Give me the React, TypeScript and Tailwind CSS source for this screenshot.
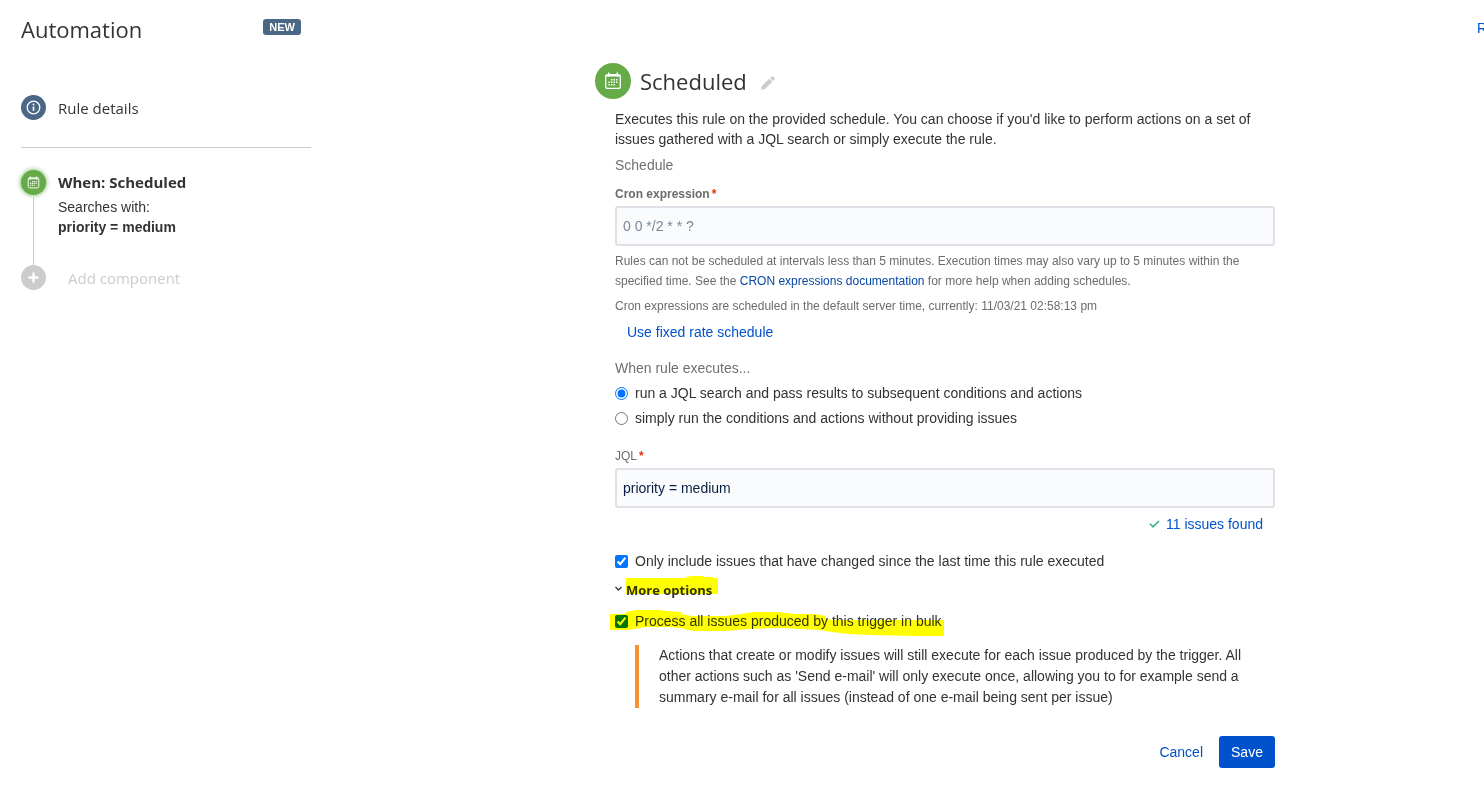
import type { ReactNode } from "react";

function CalendarIcon({ className }: { className?: string }) {
  return (
    <svg className={className} viewBox="0 0 18 18" fill="none" stroke="currentColor" aria-hidden="true">
      <rect x="1.7" y="2.6" width="14.6" height="13.8" rx="2" strokeWidth="1.3" />
      <path d="M2 3h14v1.5H2z" fill="currentColor" stroke="none" />
      <path d="M4.7 1v3M13.3 1v3" strokeWidth="1.4" strokeLinecap="round" />
      <path d="M7 7.7h7M4.4 10.2h9.6M4.4 12.7h7" strokeWidth="1.5" strokeDasharray="1.5 1" />
    </svg>
  );
}

function InfoIcon() {
  return (
    <svg className="size-[15px]" viewBox="0 0 15 15" fill="none" stroke="currentColor" aria-hidden="true">
      <circle cx="7.5" cy="7.5" r="6.3" strokeWidth="1.3" />
      <path d="M7.5 6.6v4.2" strokeWidth="1.7" />
      <circle cx="7.5" cy="4.6" r="1" fill="currentColor" stroke="none" />
    </svg>
  );
}

function Help({ children }: { children: ReactNode }) {
  return <p className="text-xs leading-5 text-[#6c6c6c]">{children}</p>;
}

function Sidebar() {
  return (
    <aside className="w-[406px] shrink-0 pl-[21px] pr-[95px]">
      <header className="flex h-[58px] items-center justify-between pr-[10px]">
        <h1 className="font-[Segoe_UI,Open_Sans,sans-serif] text-[22px] leading-8">Automation</h1>
        <span className="mb-1 rounded-[3px] bg-[#4a6785] px-1.5 text-[11px] font-bold leading-4 text-white">NEW</span>
      </header>

      <a href="#details" className="mt-[37px] flex items-center gap-3 border-b border-[#ccc] pb-[27px]">
        <span className="grid size-[25px] place-items-center rounded-full bg-[#4a6785] text-white">
          <InfoIcon />
        </span>
        <span className="font-[Segoe_UI,Open_Sans,sans-serif] text-[15px] leading-5">Rule details</span>
      </a>

      <div className="mt-[22px] flex gap-3">
        <div className="flex flex-col items-center">
          <span className="grid size-[25px] place-items-center rounded-full bg-[#67ab49] text-white shadow-[0_0_5px_#67ab49]">
            <CalendarIcon className="size-[13px]" />
          </span>
          <span className="mt-0.5 w-px flex-1 bg-[#ccc]" />
        </div>
        <a href="#trigger" className="block pb-7">
          <span className="block pb-[3px] font-[Segoe_UI,Open_Sans,sans-serif] text-[15px] font-bold leading-6">When: Scheduled</span>
          <span className="block leading-5">Searches with:</span>
          <span className="block font-bold leading-5">priority = medium</span>
        </a>
      </div>
      <button type="button" className="flex items-center gap-[22px] text-[#ccc]">
        <span className="grid size-[25px] place-items-center rounded-full bg-[#ccc] text-white">
          <svg className="size-[11px]" viewBox="0 0 11 11" stroke="currentColor" strokeWidth="2.4" aria-hidden="true">
            <path d="M5.5 1.5v8M1.5 5.5h8" strokeLinecap="round" />
          </svg>
        </span>
        <span className="font-[Segoe_UI,Open_Sans,sans-serif] text-[15px] leading-5">Add component</span>
      </button>
    </aside>
  );
}

function ScheduledForm() {
  return (
    <form className="w-full max-w-[660px]" onSubmit={(e) => e.preventDefault()}>
      <div className="-ml-5 flex items-center">
        <span className="grid size-9 place-items-center rounded-full bg-[#67ab49] text-white">
          <CalendarIcon className="size-[18px]" />
        </span>
        <h2 className="ml-[9px] font-[Segoe_UI,Open_Sans,sans-serif] text-[22px] leading-9">Scheduled</h2>
        <button type="button" aria-label="Rename" className="ml-3.5 pt-1 text-[#ccc]">
          <svg className="size-[14px]" viewBox="0 0 14 14" fill="currentColor" aria-hidden="true">
            <path d="M0 13.8l.6-3.6L8.3 2.7l3 3-7.2 7.2z" />
            <path d="M9 2L10.4.8c.6-.5 1.2-.5 1.8 0l1.2 1.2c.5.6.5 1.1.1 1.7L12 5z" />
          </svg>
        </button>
      </div>

      <p className="mt-2.5 leading-5">
        Executes this rule on the provided schedule. You can choose if you'd like to perform actions on a set of issues
        gathered with a JQL search or simply execute the rule.
      </p>
      <p className="mt-1.5 leading-5 text-[#707070]">Schedule</p>

      <label htmlFor="cron" className="mt-[11px] block text-xs font-bold leading-4 text-[#6b6b6b]">
        Cron expression<span className="ml-0.5 text-[#de350b]">*</span>
      </label>
      <input
        id="cron"
        type="text"
        defaultValue="0 0 */2 * * ?"
        className="mt-1 block h-10 w-full rounded-[3px] border-2 border-[#dfe1e6] bg-[#fafbfc] px-1.5 text-[#7a869a]"
      />
      <div className="mt-[5px]">
        <Help>
          Rules can not be scheduled at intervals less than 5 minutes. Execution times may also vary up to 5 minutes
          within the specified time. See the{" "}
          <a href="#cron-docs" className="text-[#0747a6]">CRON expressions documentation</a> for more help when adding
          schedules.
        </Help>
      </div>
      <div className="mt-[5px]">
        <Help>Cron expressions are scheduled in the default server time, currently: 11/03/21 02:58:13 pm</Help>
      </div>
      <button type="button" className="ml-3 mt-1.5 block leading-5 text-[#0052cc]">Use fixed rate schedule</button>

      <fieldset className="mt-4">
        <legend className="leading-5 text-[#707070]">When rule executes...</legend>
        <label className="mt-[3px] flex items-center gap-[7px] leading-[25px]">
          <input type="radio" name="mode" defaultChecked className="size-[13px]" />
          run a JQL search and pass results to subsequent conditions and actions
        </label>
        <label className="flex items-center gap-[7px] leading-[25px]">
          <input type="radio" name="mode" className="size-[13px]" />
          simply run the conditions and actions without providing issues
        </label>
      </fieldset>

      <label htmlFor="jql" className="mt-[17px] block text-xs leading-4 text-[#6b6b6b]">
        JQL<span className="ml-0.5 font-bold text-[#de350b]">*</span>
      </label>
      <input
        id="jql"
        type="text"
        defaultValue="priority = medium"
        className="mt-1 block h-10 w-full rounded-[3px] border-2 border-[#dfe1e6] bg-[#fafbfc] px-1.5 text-[#091e42]"
      />
      <div className="mt-1.5 flex items-center justify-end gap-1.5 pr-3 leading-5">
        <svg className="h-2 w-[11px]" viewBox="0 0 11 8" fill="none" stroke="#36b37e" strokeWidth="1.6" aria-hidden="true">
          <path d="M1 3.8l3 3L10 1" />
        </svg>
        <a href="#issues" className="text-[#0052cc]">11 issues found</a>
      </div>

      <label className="mt-[17px] flex items-center gap-[7px] leading-5">
        <input type="checkbox" defaultChecked className="size-[13px]" />
        Only include issues that have changed since the last time this rule executed
      </label>

      {/* marker strokes over the two highlighted lines */}
      <div className="relative">
        <button type="button" className="mt-2 flex items-center gap-1 leading-[22px]">
          <svg className="mb-1 h-[5px] w-[7px]" viewBox="0 0 7 5" fill="none" stroke="currentColor" strokeWidth="1.3" aria-hidden="true">
            <path d="M.5 1l3 3 3-3" />
          </svg>
          <span className="font-[Segoe_UI,Open_Sans,sans-serif] text-[13px] font-bold">More options</span>
        </button>
        <label className="mt-2.5 flex items-center gap-[7px] leading-5">
          <input type="checkbox" defaultChecked className="size-[13px]" />
          Process all issues produced by this trigger in bulk
        </label>
        <svg
          className="pointer-events-none absolute -left-[5px] -top-2 h-[66px] w-[336px] mix-blend-multiply"
          viewBox="0 0 336 66"
          fill="#ff0"
          aria-hidden="true"
        >
          <path d="M16 7H76V6L82 5H94V6H104V7H108V23H16z" />
          <path d="M0 43H16V41L26 39H48L56 40 71 41V43L82 45H116L130 43 144 41H168L184 43H205L216 45V48L224 49H334V65H306L262 64 238 63 222 61 210 59 170 57 138 58 115 60H84L70 57 58 56H36L18 59H0z" />
        </svg>
      </div>

      <p className="ml-5 mt-3.5 border-l-4 border-[#f79232] pl-5 pr-5 leading-[21px]">
        Actions that create or modify issues will still execute for each issue produced by the trigger. All other
        actions such as 'Send e-mail' will only execute once, allowing you to for example send a summary e-mail for all
        issues (instead of one e-mail being sent per issue)
      </p>

      <div className="mt-7 flex justify-end gap-4 pb-9">
        <button type="button" className="leading-8 text-[#0052cc]">Cancel</button>
        <button type="submit" className="w-14 rounded-[3px] bg-[#0052cc] leading-8 text-white">Save</button>
      </div>
    </form>
  );
}

export default function App() {
  return (
    <div className="flex min-h-screen overflow-hidden bg-white font-['Liberation_Sans',Arial,sans-serif] text-sm text-[#333]">
      <Sidebar />
      <main className="flex min-w-0 flex-1 flex-col items-center">
        <nav className="flex h-[63px] w-full justify-end pt-[18px]">
          <a href="#return" className="w-[7px] overflow-hidden leading-5 text-[#0052cc]">R</a>
        </nav>
        <ScheduledForm />
      </main>
    </div>
  );
}
